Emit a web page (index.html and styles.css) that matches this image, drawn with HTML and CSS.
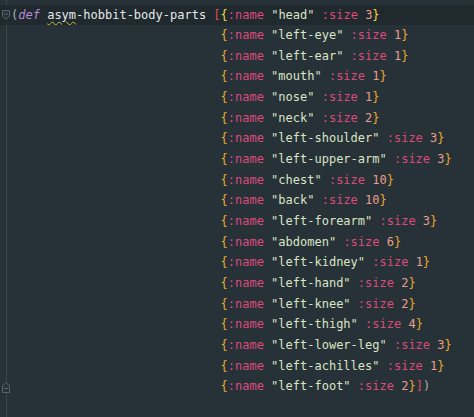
FILE: index.html
```html
<!DOCTYPE html>
<html>
<head>
<meta charset="utf-8">
<link rel="stylesheet" href="styles.css">
</head>
<body>
<div class="editor">
  <div class="line current"><span class="gutter"><svg class="fold" width="10" height="12" viewBox="0 0 10 12"><path d="M1.5 1.5 H8.5 V7 L5 10.5 L1.5 7 Z" fill="#263238" stroke="#56646b" stroke-width="1"/><path d="M3 5 H7" stroke="#56646b" stroke-width="1"/></svg></span><span class="code"><span class="p">(</span><span class="kw">def</span> <span class="sym"><span class="warn">asym</span>-hobbit-body-parts</span> <span class="br">[</span><span class="cb hl">{</span><span class="k">:name</span> <span class="s">"head"</span> <span class="k">:size</span> <span class="n">3</span><span class="cb hl">}</span></span></div>
  <div class="line"><span class="gutter"></span><span class="code">                             <span class="cb">{</span><span class="k">:name</span> <span class="s">"left-eye"</span> <span class="k">:size</span> <span class="n">1</span><span class="cb">}</span></span></div>
  <div class="line"><span class="gutter"></span><span class="code">                             <span class="cb">{</span><span class="k">:name</span> <span class="s">"left-ear"</span> <span class="k">:size</span> <span class="n">1</span><span class="cb">}</span></span></div>
  <div class="line"><span class="gutter"></span><span class="code">                             <span class="cb">{</span><span class="k">:name</span> <span class="s">"mouth"</span> <span class="k">:size</span> <span class="n">1</span><span class="cb">}</span></span></div>
  <div class="line"><span class="gutter"></span><span class="code">                             <span class="cb">{</span><span class="k">:name</span> <span class="s">"nose"</span> <span class="k">:size</span> <span class="n">1</span><span class="cb">}</span></span></div>
  <div class="line"><span class="gutter"></span><span class="code">                             <span class="cb">{</span><span class="k">:name</span> <span class="s">"neck"</span> <span class="k">:size</span> <span class="n">2</span><span class="cb">}</span></span></div>
  <div class="line"><span class="gutter"></span><span class="code">                             <span class="cb">{</span><span class="k">:name</span> <span class="s">"left-shoulder"</span> <span class="k">:size</span> <span class="n">3</span><span class="cb">}</span></span></div>
  <div class="line"><span class="gutter"></span><span class="code">                             <span class="cb">{</span><span class="k">:name</span> <span class="s">"left-upper-arm"</span> <span class="k">:size</span> <span class="n">3</span><span class="cb">}</span></span></div>
  <div class="line"><span class="gutter"></span><span class="code">                             <span class="cb">{</span><span class="k">:name</span> <span class="s">"chest"</span> <span class="k">:size</span> <span class="n">10</span><span class="cb">}</span></span></div>
  <div class="line"><span class="gutter"></span><span class="code">                             <span class="cb">{</span><span class="k">:name</span> <span class="s">"back"</span> <span class="k">:size</span> <span class="n">10</span><span class="cb">}</span></span></div>
  <div class="line"><span class="gutter"></span><span class="code">                             <span class="cb">{</span><span class="k">:name</span> <span class="s">"left-forearm"</span> <span class="k">:size</span> <span class="n">3</span><span class="cb">}</span></span></div>
  <div class="line"><span class="gutter"></span><span class="code">                             <span class="cb">{</span><span class="k">:name</span> <span class="s">"abdomen"</span> <span class="k">:size</span> <span class="n">6</span><span class="cb">}</span></span></div>
  <div class="line"><span class="gutter"></span><span class="code">                             <span class="cb">{</span><span class="k">:name</span> <span class="s">"left-kidney"</span> <span class="k">:size</span> <span class="n">1</span><span class="cb">}</span></span></div>
  <div class="line"><span class="gutter"></span><span class="code">                             <span class="cb">{</span><span class="k">:name</span> <span class="s">"left-hand"</span> <span class="k">:size</span> <span class="n">2</span><span class="cb">}</span></span></div>
  <div class="line"><span class="gutter"></span><span class="code">                             <span class="cb">{</span><span class="k">:name</span> <span class="s">"left-knee"</span> <span class="k">:size</span> <span class="n">2</span><span class="cb">}</span></span></div>
  <div class="line"><span class="gutter"></span><span class="code">                             <span class="cb">{</span><span class="k">:name</span> <span class="s">"left-thigh"</span> <span class="k">:size</span> <span class="n">4</span><span class="cb">}</span></span></div>
  <div class="line"><span class="gutter"></span><span class="code">                             <span class="cb">{</span><span class="k">:name</span> <span class="s">"left-lower-leg"</span> <span class="k">:size</span> <span class="n">3</span><span class="cb">}</span></span></div>
  <div class="line"><span class="gutter"></span><span class="code">                             <span class="cb">{</span><span class="k">:name</span> <span class="s">"left-achilles"</span> <span class="k">:size</span> <span class="n">1</span><span class="cb">}</span></span></div>
  <div class="line"><span class="gutter"><svg class="fold" width="10" height="14" viewBox="0 0 10 14"><path d="M1.5 12.5 H8.5 V6 L5 2.5 L1.5 6 Z" fill="#263238" stroke="#56646b" stroke-width="1"/><path d="M3 8.5 H7" stroke="#56646b" stroke-width="1"/></svg></span><span class="code">                             <span class="cb">{</span><span class="k">:name</span> <span class="s">"left-foot"</span> <span class="k">:size</span> <span class="n">2</span><span class="cb">}</span><span class="br">]</span><span class="p">)</span></span></div>
</div>
</body>
</html>
```

FILE: styles.css
```css
html, body {
  margin: 0;
  padding: 0;
  background: #263238;
}

.editor {
  min-height: 417px;
  padding-top: 4.5px;
  box-sizing: border-box;
  background-image: linear-gradient(#3b484e, #3b484e);
  background-size: 1px 100%;
  background-position: 6px 0;
  background-repeat: no-repeat;
  font-family: "DejaVu Sans Mono", "Liberation Mono", monospace;
  font-size: 12px;
  color: #dfe5e7;
}

.line {
  display: flex;
  height: 20.67px;
  line-height: 20.67px;
  align-items: center;
}

.line.current {
  background: #1f292e;
}

.gutter {
  width: 11px;
  flex: 0 0 11px;
  height: 100%;
  display: flex;
  align-items: center;
}

.fold {
  display: block;
  margin-left: 1px;
}

.code {
  white-space: pre;
}

.p { color: #a7b1b5; }
.kw { color: #b68ad6; font-style: italic; }
.sym { color: #e4e8ea; }
.warn {
  text-decoration: underline wavy #c9bb3c;
  text-decoration-thickness: 1px;
  text-underline-offset: 2px;
}
.br { color: #e24c4c; }
.cb { color: #eaa92e; }
.cb.hl { color: #f4dc3c; }
.k { color: #dd4a7c; }
.s { color: #dbe4c4; }
.n { color: #eb9e8c; }
```
